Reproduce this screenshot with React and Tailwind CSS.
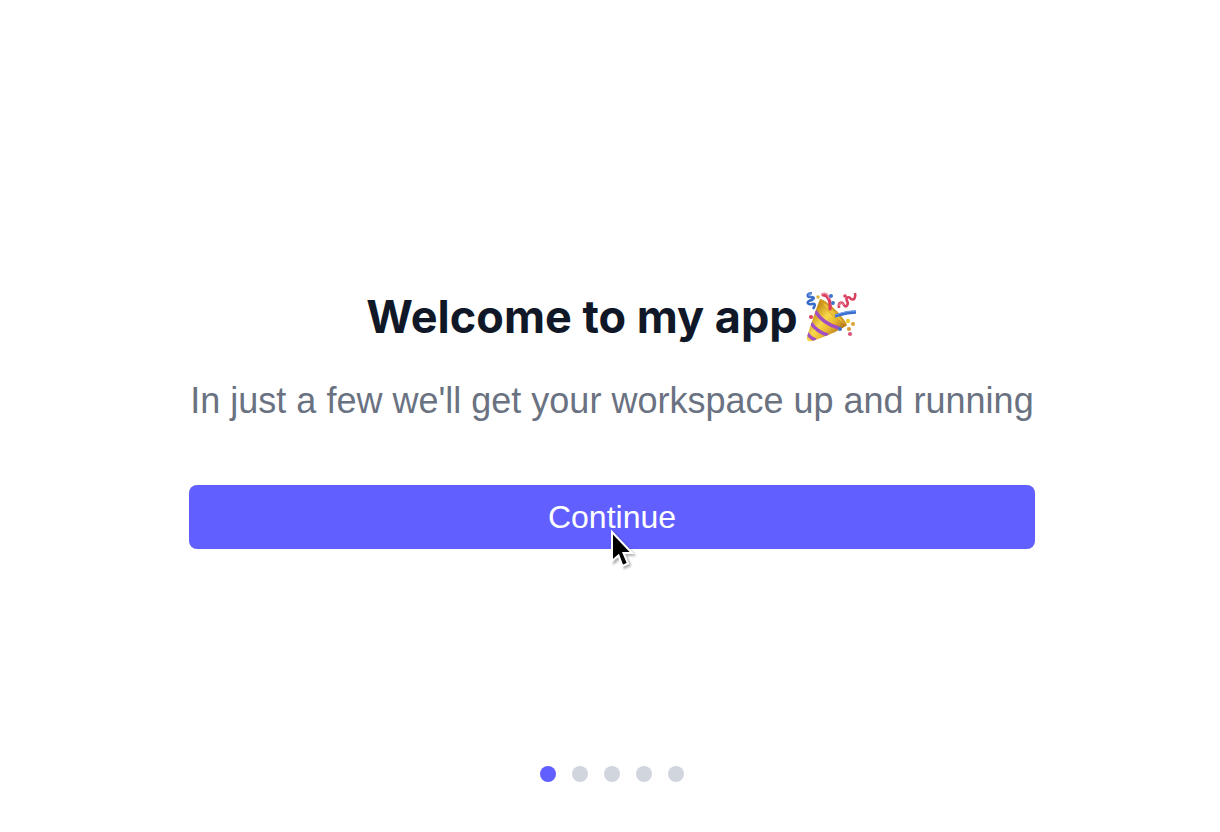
import React, { useState } from 'react';

const steps = ['Welcome', 'Profile', 'Workspace', 'Team', 'Finish'];

function PartyPopper() {
  return (
    <svg viewBox="0 0 52 50" className="h-[50px] w-[52px] shrink-0" role="img" aria-label="Party popper" fill="none">
      <defs>
        <linearGradient id="cone" x1="8" y1="20" x2="32" y2="40" gradientUnits="userSpaceOnUse">
          <stop offset="0" stopColor="#c9921c" />
          <stop offset="0.4" stopColor="#f8d84a" />
          <stop offset="0.7" stopColor="#e9b92f" />
          <stop offset="1" stopColor="#b97d1a" />
        </linearGradient>
        <clipPath id="coneClip">
          <path d="M14 7 C22 9 37 24 41 33 C38 36 20 45 6 49 C2 50 0 48 1 45 C4 35 10 17 14 7Z" />
        </clipPath>
      </defs>
      <path d="M14 7 C22 9 37 24 41 33 C38 36 20 45 6 49 C2 50 0 48 1 45 C4 35 10 17 14 7Z" fill="url(#cone)" />
      <g clipPath="url(#coneClip)" stroke="#a34fc4" strokeWidth="3.4">
        <path d="M9 19 C14 27 21 33 33 36" />
        <path d="M5 31 C9 37 14 41 22 43" />
        <path d="M1 41 C3 44 6 47 10 48" />
      </g>
      <path d="M14 7 C17 16 29 28 41 33 C37 24 22 9 14 7Z" fill="#d29b24" />
      <path d="M17 11 C21 19 28 26 37 30 C31 22 24 14 17 11Z" fill="#edc137" />
      <path d="M17 3 C22 3 25 9 24 17" stroke="#dc3c5d" strokeWidth="3.2" strokeLinecap="round" />
      <path d="M16 2 C19 0 22 2 23 6" stroke="#f08a9d" strokeWidth="1.6" strokeLinecap="round" />
      <path d="M29 24 C34 23 38 20 50 20" stroke="#3a6fd0" strokeWidth="3.4" />
      <path d="M29 23 C34 22 38 19 50 19" stroke="#74a2ee" strokeWidth="1" />
      <path d="M6 1 C0 2 1 5 5 5 C10 5 7 8 3 9 C0 11 3 13 6 12 C10 11 9 14 7 17" stroke="#396bc9" strokeWidth="2.6" />
      <path d="M6 1 C1 2 2 4 5 4" stroke="#87adf0" strokeWidth="1" />
      <path d="M33 16 C32 10 36 9 38 13 C40 17 43 12 41 9 C39 5 43 4 45 7 C48 9 50 5 49 1" stroke="#d94060" strokeWidth="2.6" />
      <path d="M33 14 C33 10 36 10 38 13" stroke="#f397aa" strokeWidth="1" />
      <circle cx="25" cy="4" r="2" fill="#3e73c8" />
      <circle cx="27" cy="11" r="1.9" fill="#3e73c8" />
      <circle cx="12" cy="5" r="1.7" fill="#e2b12b" />
      <circle cx="5" cy="25" r="2.1" fill="#d94360" />
      <circle cx="34" cy="37" r="2" fill="#4372c8" />
      <circle cx="42" cy="29" r="2.2" fill="#efcb33" />
      <circle cx="43" cy="37" r="2.1" fill="#d99b35" />
      <circle cx="47" cy="32" r="2.1" fill="#dfa53a" />
      <circle cx="44" cy="42" r="2.1" fill="#d6587b" />
      <circle cx="39" cy="4" r="1.8" fill="#db4663" />
    </svg>
  );
}

function Pointer() {
  return (
    <svg
      viewBox="0 0 26 40"
      className="pointer-events-none absolute top-[45px] left-1/2 h-10 w-[26px] overflow-visible drop-shadow-[2px_2px_1px_rgba(0,0,0,0.3)]"
      aria-hidden="true"
    >
      <path
        d="M0 2 L0 31 L6.5 25.5 L10.5 36 L16 33.5 L11.5 23 L20 23 Z"
        fill="#000"
        stroke="#fff"
        strokeWidth="2"
      />
    </svg>
  );
}

function App() {
  const [step, setStep] = useState(0);

  return (
    <div className="flex min-h-screen flex-col bg-white pl-1 font-['Liberation_Sans',Arial,sans-serif]">
      <main className="flex flex-1 flex-col items-center justify-center pt-[72px]">
        <div className="w-full max-w-[846px]">
          <h1 className="flex items-center justify-center gap-2 font-['Inter',sans-serif] text-[45px] leading-14 font-bold text-gray-900">
            Welcome to my app
            <PartyPopper />
          </h1>
          <p className="mt-9 text-center text-4xl leading-10 text-gray-500">
            In just a few we'll get your workspace up and running
          </p>
          <button
            type="button"
            onClick={() => setStep((step + 1) % steps.length)}
            className="relative mt-16 h-16 w-full rounded-lg bg-[#615fff] text-[32px] leading-10 text-white"
          >
            Continue
            <Pointer />
          </button>
        </div>
      </main>
      <nav aria-label="Steps" className="flex justify-center gap-4 pb-[50px]">
        {steps.map((name, i) => (
          <button
            key={name}
            type="button"
            aria-label={name}
            onClick={() => setStep(i)}
            className={`size-4 rounded-full ${i === step ? 'bg-[#615fff]' : 'bg-gray-300'}`}
          />
        ))}
      </nav>
    </div>
  );
}

export default App;
